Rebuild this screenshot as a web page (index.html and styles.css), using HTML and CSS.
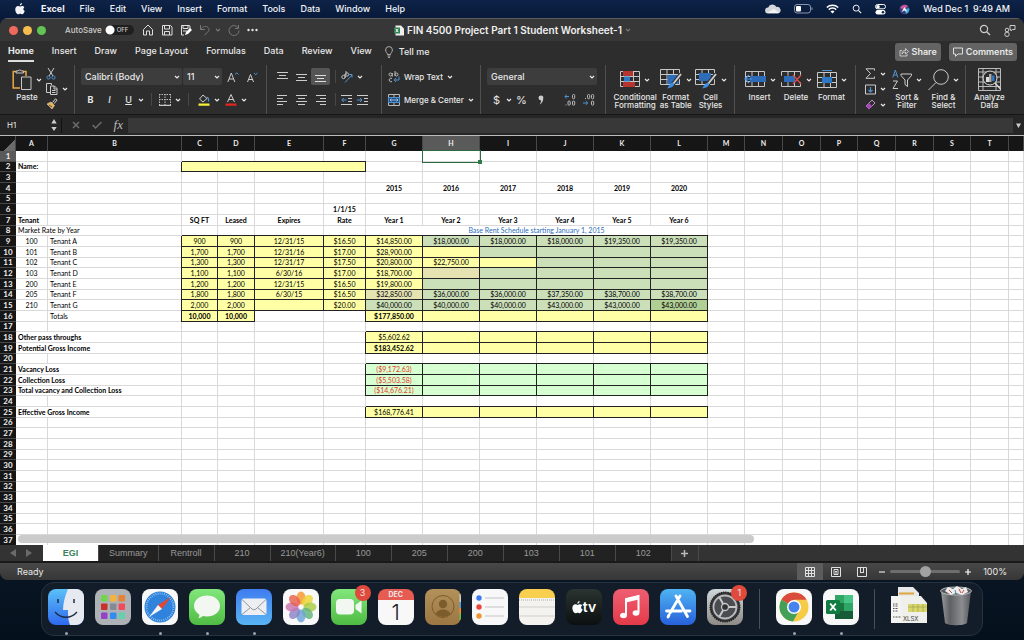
FILE: index.html
```html
<!DOCTYPE html>
<html lang="en">
<head>
    <meta charset="UTF-8">
    <meta name="viewport" content="width=device-width, initial-scale=1.0">
    <title>FIN 4500 Project Part 1 Student Worksheet-1</title>
    <link rel="stylesheet" href="styles.css">
</head>
<body>

    <svg class="sprite" aria-hidden="true">
        <symbol id="chev" viewBox="0 0 6 6"><path d="M1 2l2 2 2-2" fill="none" stroke="currentColor" stroke-width="1.2"/></symbol>
        <symbol id="apple" viewBox="0 0 20 24"><path d="M14 0c.2 2.400-2 5-4.300 4.900C9.500 2.600 11.700.3 14 0zM18.600 8.300c-2.900 1.800-2.500 6.300.9 7.600-.9 2.800-3 6.600-5.200 6.700-1.500 0-2.100-.9-3.900-.9s-2.500.9-3.900.9C3.300 22.600.5 17 .5 13 .5 8.700 3.200 6.200 6 6.200c1.800 0 3 1 4.300 1 1.200 0 2.600-1.200 4.700-1.100 1.400.1 2.800.8 3.600 2.200z" fill="currentColor"/></symbol>
        <symbol id="lens" viewBox="0 0 12 12"><circle cx="5" cy="5" r="3.600" fill="none" stroke="currentColor" stroke-width="1.200"/><path d="M7.700 7.700L11 11" stroke="currentColor" stroke-width="1.300"/></symbol>
        <symbol id="grid" viewBox="0 0 20 16"><path d="M.5.5h19v15H.5zM.5 5.500h19M.5 10.500h19M7 .5v15M13.500 .5v15" fill="none" stroke="#c8c8c8"/></symbol>
    </svg>

    <header class="menubar">
        <svg class="apple" width="10" height="12"><use href="#apple"/></svg>
        <nav class="menus">
            <button class="app-name">Excel</button>
            <button>File</button>
            <button>Edit</button>
            <button>View</button>
            <button>Insert</button>
            <button>Format</button>
            <button>Tools</button>
            <button>Data</button>
            <button>Window</button>
            <button>Help</button>
        </nav>
        <div class="tray">
            <svg width="16" height="10" viewBox="0 0 16 10"><path d="M3 9.500a3 3 0 0 1 .2-6A4.500 4.500 0 0 1 11.500 3 3.300 3.300 0 0 1 13 9.500z" fill="#d4d7dc"/><path d="M2 9l7-4 5 4z" fill="#f3f4f6"/></svg>
            <svg width="19" height="10" viewBox="0 0 19 10"><rect x=".5" y=".5" width="16" height="8.500" rx="2.500" fill="none" stroke="#8894a8"/><rect x="2" y="2" width="5" height="5.500" rx="1" fill="#fff"/><path d="M18 3.500v2.500" stroke="#8894a8"/></svg>
            <svg width="13" height="10" viewBox="0 0 13 10"><path d="M.8 3.500a8.300 8.300 0 0 1 11.400 0M2.800 5.600a5.300 5.300 0 0 1 7.400 0" fill="none" stroke="#fff" stroke-width="1.500"/><path d="M4.500 7.400a3 3 0 0 1 4 0l-2 2.200z" fill="#fff"/></svg>
            <svg width="10" height="10"><use href="#lens"/></svg>
            <svg width="11" height="11" viewBox="0 0 11 11"><rect x=".5" y=".5" width="10" height="4.300" rx="2.100" fill="none" stroke="#fff"/><circle cx="3" cy="2.700" r="1.800" fill="#fff"/><rect x=".5" y="6" width="10" height="4.500" rx="2.200" fill="#fff"/><circle cx="8" cy="8.200" r="1.300" fill="#10254a"/></svg>
            <svg width="11" height="11" viewBox="0 0 11 11"><circle cx="5.500" cy="5.500" r="5" fill="#3d3a78"/><path d="M1 4a5 5 0 0 1 8-2L5.500 5.500z" fill="#c9549c"/><path d="M10 4a5 5 0 0 1-3 6L5.500 5.500z" fill="#34a8cf"/><path d="M2.500 8l3-5 3 5-3-1.500z" fill="#e8effc"/></svg>
            <time class="clock">Wed Dec 1&nbsp; 9:49 AM</time>
        </div>
    </header>

    <main class="window">
        <div class="titlebar">
            <div class="title-left">
                <div class="lights"><span class="red"></span><span class="amber"></span><span class="green"></span></div>
                <label class="autosave">AutoSave <input type="checkbox"><span class="toggle">OFF</span></label>
                <div class="quick">
                    <button aria-label="Home"><svg width="12" height="12" viewBox="0 0 12 12"><path d="M1.500 5.500L6 1l4.500 4.500V11H7.500V7h-3v4h-3z" fill="none" stroke="#ddd"/></svg></button>
                    <button aria-label="Save"><svg width="12" height="12" viewBox="0 0 12 12"><path d="M1.500 1.500h8l1.500 1.500v8H1.500zM3.500 1.500v3.500h5V1.500M3.500 11V7.500h5V11" fill="none" stroke="#ddd"/></svg></button>
                    <button aria-label="Save As"><svg width="12" height="12" viewBox="0 0 12 12"><path d="M10 5V2L9 1.500H1.500V11H4M3 1.500v3h5v-3M3 7h4" fill="none" stroke="#ddd"/><path d="M5 11l1-3 4-4 2 2-4 4z" fill="#fff"/></svg></button>
                    <button class="dim" aria-label="Undo"><svg width="12" height="12" viewBox="0 0 12 12"><path d="M1.500 1v4.500H6M1.500 5.500C4 2 7 1.500 9 3.500s1 4-3.500 7.500" fill="none" stroke="currentColor"/></svg><svg width="6" height="6"><use href="#chev"/></svg></button>
                    <button class="dim" aria-label="Redo"><svg width="12" height="12" viewBox="0 0 12 12"><path d="M10.500 1v3.500H7M10.300 4A5 5 0 1 0 11 6.500" fill="none" stroke="currentColor"/></svg></button>
                    <button aria-label="More"><svg width="11" height="4" viewBox="0 0 11 4"><g fill="#e4e4e4"><circle cx="1.500" cy="2" r="1.200"/><circle cx="5.500" cy="2" r="1.200"/><circle cx="9.500" cy="2" r="1.200"/></g></svg></button>
                </div>
            </div>
            <h1 class="doc-title">
                <svg width="10" height="11" viewBox="0 0 10 11"><path d="M1.500.5H7l3 3V10.500H1.500z" fill="#eee"/><path d="M0 2.500h6v6H0z" fill="#2b7d4b"/><path d="M1.700 3.800l2.600 3.400M4.300 3.800L1.700 7.200" stroke="#fff"/></svg>
                FIN 4500 Project Part 1 Student Worksheet-1
                <svg class="dim" width="6" height="6"><use href="#chev"/></svg>
            </h1>
            <div class="title-tools">
                <button aria-label="Search"><svg width="12" height="12"><use href="#lens"/></svg></button>
                <button aria-label="Share status"><svg width="13" height="13" viewBox="0 0 13 13"><g fill="none" stroke="#ccc"><circle cx="4" cy="6" r="1.800"/><circle cx="4" cy="10.300" r="2.200"/><path d="M7 1.500h5v4H9.500L8 7V5.500H7z"/></g></svg></button>
            </div>
        </div>

        <div class="ribbon-tabs">
            <nav class="tabs">
                <button class="on">Home</button>
                <button>Insert</button>
                <button>Draw</button>
                <button>Page Layout</button>
                <button>Formulas</button>
                <button>Data</button>
                <button>Review</button>
                <button>View</button>
            </nav>
            <button class="tell"><svg width="8" height="12" viewBox="0 0 8 12"><path d="M2.500 8.500C2.500 7 .6 6 .6 4a3.400 3.400 0 0 1 6.800 0c0 2-1.900 3-1.900 4.500zM2.500 10h3M3 11.400h2" fill="none" stroke="#bbb" stroke-width=".9"/></svg>Tell me</button>
            <div class="actions">
                <button class="pill"><svg width="10" height="10" viewBox="0 0 10 10"><path d="M3 3.500H1v5.500h7V7M3 7c0-3 1.500-3.500 3.500-3.500V1.500l3 3-3 2.500V5C5 5 4 5.500 3 7z" fill="none" stroke="#ddd" stroke-width=".8"/></svg>Share</button>
                <button class="pill"><svg width="10" height="10" viewBox="0 0 10 10"><path d="M.5 1h9v6H5L2.500 9.300V7h-2z" fill="none" stroke="#ddd"/></svg>Comments</button>
            </div>
        </div>

        <div class="ribbon">
            <div class="group clip">
                <button class="big paste">
                    <span class="pic"><svg width="20" height="23" viewBox="0 0 20 23"><path d="M8 20H1.200V3.500H14V8" fill="none" stroke="#eaa944" stroke-width="1.500"/><path d="M4 5V3h2a2 2 0 0 1 3.500 0h2v2z" fill="#333" stroke="#c8c8c8"/><path d="M9.500 9h9.500v12.500H9.500z" fill="#2f2f2f" stroke="#c8c8c8"/></svg><svg class="chev"><use href="#chev"/></svg></span>
                    Paste
                </button>
                <div class="stack">
                    <button aria-label="Cut"><svg width="10" height="12" viewBox="0 0 10 12"><path d="M2 0l5 8M8 0L3 8" stroke="#ccc" fill="none"/><g fill="none" stroke="#4f93d2"><circle cx="2.500" cy="9.500" r="1.600"/><circle cx="7.500" cy="9.500" r="1.600"/></g></svg></button>
                    <button aria-label="Copy"><svg width="12" height="12" viewBox="0 0 12 12"><path d="M4 9.500H.5v-9h5V2M4.500 3h4L11 5.500v6H4.500zM8 3v3h3M6 7.500h3.500M6 9.500h3.500" fill="none" stroke="#ccc"/></svg><svg class="chev"><use href="#chev"/></svg></button>
                    <button aria-label="Format Painter"><svg width="12" height="12" viewBox="0 0 12 12"><path d="M6.500 4.500L9.500.8l1.500 1.400-3 3.500" fill="none" stroke="#ddd"/><path d="M1 6l4-2 3.500 3.500L6 11z" fill="#e5b35c" stroke="#e8d3a8" stroke-width=".6"/><path d="M3 7l3 2" stroke="#2d2d2d" stroke-width=".8"/></svg></button>
                </div>
            </div>

            <div class="group font">
                <div class="row">
                    <div class="drop grow"><select aria-label="Font"><option>Calibri (Body)</option></select><svg class="chev"><use href="#chev"/></svg></div>
                    <div class="drop size"><select aria-label="Font size"><option>11</option></select><svg class="chev"><use href="#chev"/></svg></div>
                    <button class="slot" aria-label="Grow font"><svg width="12" height="12" viewBox="0 0 12 12"><path d="M.8 11L4.300 2l3.500 9M2 8h4.700" fill="none" stroke="#ccc"/><path d="M8 3.500L9.800 1.800l1.700 1.700" fill="none" stroke="#4f93d2"/></svg></button>
                    <button class="slot" aria-label="Shrink font"><svg width="12" height="12" viewBox="0 0 12 12"><path d="M1.500 11l3-7.500 3 7.500M2.500 8.500h4" fill="none" stroke="#ccc"/><path d="M8 2l1.700 1.700L11.500 2" fill="none" stroke="#4f93d2"/></svg></button>
                </div>
                <div class="row">
                    <button class="slot strong">B</button>
                    <button class="slot italic">I</button>
                    <button class="slot under">U</button>
                    <svg class="chev"><use href="#chev"/></svg>
                    <i class="bar"></i>
                    <button aria-label="Borders"><svg width="12" height="12" viewBox="0 0 12 12"><path d="M.5 0v11M11.500 0v11M6 0v11M0 .5h12M0 5.500h12" stroke="#bbb" stroke-dasharray="1.500 1" fill="none"/><path d="M0 11.300h12" stroke="#eee"/></svg><svg class="chev"><use href="#chev"/></svg></button>
                    <i class="bar"></i>
                    <button class="tint" aria-label="Fill color"><svg width="12" height="12" viewBox="0 0 12 12"><path d="M5 1l4 3.500-4 3.500-3.500-3z" fill="none" stroke="#ccc"/><path d="M9 3.500c1.500 0 1.700 2 1.500 4" stroke="#4f93d2" stroke-width="1.300" fill="none"/><path d="M.5 9.500h11v2.200H.5z" fill="#f7ef37"/></svg><svg class="chev"><use href="#chev"/></svg></button>
                    <button class="tint" aria-label="Font color"><svg width="12" height="12" viewBox="0 0 12 12"><path d="M2.500 8L6 .5 9.500 8M3.700 5.500h4.600" fill="none" stroke="#ccc"/><path d="M.5 9.500h11v2.200H.5z" fill="#e2261d"/></svg><svg class="chev"><use href="#chev"/></svg></button>
                </div>
            </div>

            <div class="group align">
                <div class="row">
                    <button class="slot" aria-label="Align top"><svg width="11" height="12" viewBox="0 0 11 12"><path d="M0 1.500h11M2 4.500h7M0 7.500h11" stroke="#ccc"/></svg></button>
                    <button class="slot" aria-label="Align middle"><svg width="11" height="12" viewBox="0 0 11 12"><path d="M0 3.500h11M2 6.500h7M0 9.500h11" stroke="#ccc"/></svg></button>
                    <button class="slot on" aria-label="Align bottom"><svg width="11" height="12" viewBox="0 0 11 12"><path d="M0 4.500h11M2 7.500h7M0 10.500h11" stroke="#ddd"/></svg></button>
                    <i class="bar"></i>
                    <button aria-label="Orientation"><svg width="12" height="12" viewBox="0 0 12 12"><g fill="none" stroke="#bbb"><circle cx="2.500" cy="6" r="1.700"/><circle cx="6" cy="3.500" r="1.700"/><path d="M4 7V3M5 0v4"/></g><path d="M4 11.500L11 4M8 3.500h3v3" fill="none" stroke="#4f93d2"/></svg><svg class="chev"><use href="#chev"/></svg></button>
                </div>
                <div class="row">
                    <button class="slot" aria-label="Align left"><svg width="11" height="12" viewBox="0 0 11 12"><path d="M0 1.500h10M0 4.500h6M0 7.500h10M0 10.500h6" stroke="#ccc"/></svg></button>
                    <button class="slot" aria-label="Center"><svg width="11" height="12" viewBox="0 0 11 12"><path d="M0 1.500h11M2 4.500h7M0 7.500h11M2 10.500h7" stroke="#ccc"/></svg></button>
                    <button class="slot" aria-label="Align right"><svg width="11" height="12" viewBox="0 0 11 12"><path d="M1 1.500h10M5 4.500h6M1 7.500h10M5 10.500h6" stroke="#ccc"/></svg></button>
                    <i class="bar"></i>
                    <button aria-label="Decrease indent"><svg width="12" height="12" viewBox="0 0 12 12"><path d="M0 1.500h11M7 4.500h4M7 7.500h4M0 10.500h11" stroke="#ccc"/><path d="M5.500 6H.8M2.800 4L.8 6l2 2" fill="none" stroke="#4f93d2"/></svg></button>
                    <button class="slot" aria-label="Increase indent"><svg width="12" height="12" viewBox="0 0 12 12"><path d="M0 1.500h11M7 4.500h4M7 7.500h4M0 10.500h11" stroke="#ccc"/><path d="M0 6h5M3 4l2 2-2 2" fill="none" stroke="#4f93d2"/></svg></button>
                </div>
            </div>

            <div class="group wrap">
                <div class="row">
                    <button><svg width="12" height="12" viewBox="0 0 12 12"><g fill="none" stroke="#bbb"><circle cx="2.500" cy="3.500" r="1.500"/><path d="M4.300 2v3.500M7 0v5"/><circle cx="8.500" cy="3.500" r="1.500"/><path d="M4 7.500a1.800 1.800 0 1 0 0 3"/></g><path d="M11 5.500v3.500H6.500M8 7L6.300 9 8 11" fill="none" stroke="#4f93d2"/></svg>Wrap Text<svg class="chev"><use href="#chev"/></svg></button>
                </div>
                <div class="row">
                    <button><svg width="12" height="12" viewBox="0 0 12 12"><path d="M.5.5h11v11H.5zM6 .5v3M6 9v3" fill="none" stroke="#bbb"/><path d="M.5 3.500h11v5H.5z" fill="#1f4d80" stroke="#4f93d2"/><path d="M2 6h8M3.500 4.700L2 6l1.500 1.300M8.500 4.700L10 6 8.500 7.300" fill="none" stroke="#b9dafa" stroke-width=".8"/></svg>Merge &amp; Center<svg class="chev"><use href="#chev"/></svg></button>
                </div>
            </div>

            <div class="group number">
                <div class="row">
                    <div class="drop grow"><select aria-label="Number format"><option>General</option></select><svg class="chev"><use href="#chev"/></svg></div>
                </div>
                <div class="row">
                    <button class="slot sym">$</button>
                    <svg class="chev"><use href="#chev"/></svg>
                    <button class="slot sym">%</button>
                    <button class="slot" aria-label="Comma style"><svg width="8" height="12" viewBox="0 0 8 12"><path d="M4 1.500a2.300 2.300 0 0 1 2.300 2.500C6.300 7 5 9.500 2.500 10.500c1-1.300 1.600-2.500 1.600-4A2.300 2.300 0 1 1 4 1.500z" fill="#ccc"/></svg></button>
                    <i class="bar"></i>
                    <button class="slot" aria-label="Increase decimal"><svg width="12" height="12" viewBox="0 0 12 12"><path d="M5 2.500H.8M2.800.7L.8 2.500l2 1.800" fill="none" stroke="#4f93d2"/><g fill="none" stroke="#bbb"><rect x="8.500" y=".5" width="2.200" height="4.200" rx="1"/><rect x="4" y="7" width="2.200" height="4.200" rx="1"/><rect x="8.500" y="7" width="2.200" height="4.200" rx="1"/><path d="M2 10.500v1"/></g></svg></button>
                    <button class="slot" aria-label="Decrease decimal"><svg width="12" height="12" viewBox="0 0 12 12"><path d="M0 9h4.500M2.800 7.200l2 1.800-2 1.800" fill="none" stroke="#4f93d2"/><g fill="none" stroke="#bbb"><rect x="4.500" y=".5" width="2.200" height="4.200" rx="1"/><rect x="8.500" y=".5" width="2.200" height="4.200" rx="1"/><rect x="8.500" y="7" width="2.200" height="4.200" rx="1"/><path d="M2.500 4v1"/></g></svg></button>
                </div>
            </div>

            <div class="group bigs">
                <button class="big">
                    <span class="pic"><svg width="20" height="17" viewBox="0 0 20 17"><use href="#grid" width="20" height="16"/><path d="M3 0h10v5H3zM3 11h12v5H3z" fill="#b8352f"/><path d="M4 5.500h6v5H4z" fill="#2c78c4"/></svg><svg class="chev"><use href="#chev"/></svg></span>
                    Conditional<br>Formatting
                </button>
                <button class="big">
                    <span class="pic"><svg width="22" height="21" viewBox="0 0 22 21"><use href="#grid" width="20" height="16"/><path d="M7.500 6h11v9h-11z" fill="#2c6cb8"/><path d="M21 5l-8 10" stroke="#2d2d2d" stroke-width="4"/><path d="M21 5l-8 10" stroke="#ccc" stroke-width="2"/><path d="M13 13.500c2 2 1 5-6 6 2-2 2-5 6-6z" fill="#3d8ee0"/></svg><svg class="chev"><use href="#chev"/></svg></span>
                    Format<br>as Table
                </button>
                <button class="big">
                    <span class="pic"><svg width="22" height="21" viewBox="0 0 22 21"><use href="#grid" width="20" height="16"/><path d="M4 4h12v8H4z" fill="#2c6cb8"/><path d="M21 5l-8 10" stroke="#2d2d2d" stroke-width="4"/><path d="M21 5l-8 10" stroke="#ccc" stroke-width="2"/><path d="M13 13.500c2 2 1 5-6 6 2-2 2-5 6-6z" fill="#3d8ee0"/></svg><svg class="chev"><use href="#chev"/></svg></span>
                    Cell<br>Styles
                </button>
            </div>

            <div class="group bigs">
                <button class="big">
                    <span class="pic"><svg width="22" height="17" viewBox="0 0 22 17"><use href="#grid" x="1" width="20" height="16"/><path d="M6 5h16v6H6z" fill="#2c6cb8"/><path d="M8 8H1M5 4L1 8l4 4" fill="none" stroke="#4f9be8" stroke-width="1.200"/></svg><svg class="chev"><use href="#chev"/></svg></span>
                    Insert
                </button>
                <button class="big">
                    <span class="pic"><svg width="21" height="17" viewBox="0 0 21 17"><use href="#grid" width="20" height="16"/><path d="M0 4.800h20v6.400H0z" fill="#2d2d2d"/><path d="M3 5h11v6H3z" fill="#2c6cb8"/><path d="M12 4l8 9M20 4l-8 9" stroke="#e0504a" stroke-width="1.200"/></svg><svg class="chev"><use href="#chev"/></svg></span>
                    Delete
                </button>
                <button class="big">
                    <span class="pic"><svg width="20" height="20" viewBox="0 0 20 20"><use href="#grid" y="2" width="20" height="16"/><path d="M5 7h10v6H5z" fill="#2c78c4"/><path d="M5 .5h10" stroke="#4f93d2"/></svg><svg class="chev"><use href="#chev"/></svg></span>
                    Format
                </button>
            </div>

            <div class="group edit">
                <div class="stack">
                    <button aria-label="AutoSum"><svg width="11" height="11" viewBox="0 0 11 11"><path d="M9.500 2.500V.8H1l4.500 4.700L1 10.300h8.500V8.500" fill="none" stroke="#ccc"/></svg><svg class="chev"><use href="#chev"/></svg></button>
                    <button aria-label="Fill"><svg width="11" height="11" viewBox="0 0 11 11"><path d="M.5 1h10v9H.5z" fill="none" stroke="#ccc"/><path d="M5.500 3v5M3.500 6l2 2 2-2" fill="none" stroke="#4f93d2" stroke-width="1.200"/></svg><svg class="chev"><use href="#chev"/></svg></button>
                    <button aria-label="Clear"><svg width="11" height="11" viewBox="0 0 11 11"><path d="M1 7l6-6 3 3-6 6z" fill="none" stroke="#c98bd2"/><path d="M1 7l3-3 3 3-3 3.500z" fill="#a347b3"/></svg><svg class="chev"><use href="#chev"/></svg></button>
                </div>
                <button class="big">
                    <span class="pic"><svg width="20" height="21" viewBox="0 0 20 21"><path d="M.8 8.500L3.300 1l2.500 7.500M1.500 6h3.600" fill="none" stroke="#4f93d2"/><path d="M1 12h4.500L1 19.500h5" fill="none" stroke="#ccc"/><path d="M9 5h10.500v1.500L15.500 11v6.500L13 15.500V11L9 6.500z" fill="none" stroke="#ccc"/></svg><svg class="chev"><use href="#chev"/></svg></span>
                    Sort &amp;<br>Filter
                </button>
                <button class="big">
                    <span class="pic"><svg width="21" height="22" viewBox="0 0 21 22"><circle cx="13" cy="8" r="7.300" fill="none" stroke="#ccc"/><path d="M8 13.500L.5 21" stroke="#ccc"/></svg><svg class="chev"><use href="#chev"/></svg></span>
                    Find &amp;<br>Select
                </button>
            </div>

            <div class="group last">
                <button class="big">
                    <span class="pic"><svg width="23" height="23" viewBox="0 0 23 23"><path d="M.5 .5h22v22H.5zM.5 4h22M.5 9h22M.5 14h22M.5 18.500h22M5 .5v22M18 .5v22" fill="none" stroke="#bbb"/><circle cx="12" cy="10" r="7" fill="#2d2d2d" stroke="#ddd"/><path d="M8 9h3v5H8z" fill="#ddd"/><path d="M11 6h2.500v8H11z" fill="#aaa"/><path d="M14 7.500h2.500V13H14z" fill="#2c78c4"/><path d="M17 15l5.500 6" stroke="#ddd" stroke-width="1.300"/></svg></span>
                    Analyze<br>Data
                </button>
            </div>
        </div>

        <div class="formula-bar">
            <input class="name-box" aria-label="Name box" value="H1">
            <svg class="stepper" width="6" height="14" viewBox="0 0 6 14"><path d="M3 1l2.700 4.500H.3zM3 13L.3 9h5.400z" fill="#ccc"/></svg>
            <div class="fx-tools">
                <svg width="8" height="8" viewBox="0 0 8 8"><path d="M1 1l6 6M7 1L1 7" stroke="#6c6c6c" stroke-width="1.500"/></svg>
                <svg width="10" height="8" viewBox="0 0 10 8"><path d="M.7 4L3.500 7l6-6" fill="none" stroke="#6c6c6c" stroke-width="1.500"/></svg>
                <span class="fx">fx</span>
            </div>
            <input class="formula" aria-label="Formula">
            <svg class="open" width="5" height="5" viewBox="0 0 5 5"><path d="M0 .5h5L2.500 5z" fill="#ccc"/></svg>
        </div>

        <div class="sheet">
            <table id="cells"></table>
            <div class="scroll-thumb"></div>
        </div>

        <div class="sheet-tabs">
            <div class="arrows">
                <svg width="6" height="8" viewBox="0 0 6 8"><path d="M6 0v8L0 4z" fill="#6a6a6a"/></svg>
                <svg width="6" height="8" viewBox="0 0 6 8"><path d="M0 0v8l6-4z" fill="#6a6a6a"/></svg>
            </div>
            <button class="on">EGI</button>
            <button>Summary</button>
            <button>Rentroll</button>
            <button>210</button>
            <button>210(Year6)</button>
            <button>100</button>
            <button>205</button>
            <button>200</button>
            <button>103</button>
            <button>101</button>
            <button>102</button>
            <button class="add" aria-label="New sheet"><svg width="7" height="7" viewBox="0 0 7 7"><path d="M3.500 0v7M0 3.500h7" stroke="#bbb" stroke-width="1.500"/></svg></button>
        </div>

        <div class="status">
            <span>Ready</span>
            <div class="views">
                <button class="on" aria-label="Normal view"><svg width="10" height="10" viewBox="0 0 10 10"><path d="M.5.5h9v9h-9zM3.500 0v10M6.500 0v10M0 3.500h10M0 6.500h10" fill="none" stroke="#e0e0e0"/></svg></button>
                <button aria-label="Page layout"><svg width="10" height="10" viewBox="0 0 10 10"><path d="M.5.5h9v9h-9zM3 2.500h4v5H3zM4 4.500h2M4 6h2" fill="none" stroke="#e0e0e0"/></svg></button>
                <button aria-label="Page break"><svg width="10" height="10" viewBox="0 0 10 10"><path d="M.5.5h9v9h-9zM3.500 0v5.500M6.500 0v5.500M3 5.500h4" fill="none" stroke="#e0e0e0"/></svg></button>
            </div>
            <div class="zoom">
                <button aria-label="Zoom out"><svg width="6" height="6" viewBox="0 0 6 6"><path d="M0 3h6" stroke="#fff" stroke-width="1.200"/></svg></button>
                <input type="range" aria-label="Zoom" min="0" max="200" value="100">
                <button aria-label="Zoom in"><svg width="6" height="6" viewBox="0 0 6 6"><path d="M0 3h6M3 0v6" stroke="#fff" stroke-width="1.200"/></svg></button>
                <span>100%</span>
            </div>
        </div>
    </main>

    <footer class="dock">
        <div class="app run finder"><svg viewBox="0 0 36 36"><path d="M20 0c-3 7-5 14-5 21h5c0 6 0 10 2 15h14V0z" fill="#e6e9ef"/><path d="M10 10v4M26 10v4" stroke="#1d2a40" stroke-width="1.500"/><path d="M7 23c6 7 16 7 22 0" fill="none" stroke="#1d2a40" stroke-width="1.300"/></svg></div>
        <div class="app launchpad"><svg viewBox="0 0 36 36"><rect x="6" y="6" width="6.500" height="6.500" rx="1" fill="#72d64c"/><rect x="15" y="6" width="6.500" height="6.500" rx="1" fill="#f3b33d"/><rect x="23.500" y="6" width="6.500" height="6.500" rx="1" fill="#e88336"/><rect x="6" y="14.500" width="6.500" height="6.500" rx="1" fill="#c9302c"/><rect x="15" y="14.500" width="6.500" height="6.500" rx="1" fill="#858a90"/><rect x="23.500" y="14.500" width="6.500" height="6.500" rx="1" fill="#f04a5b"/><rect x="6" y="23.500" width="6.500" height="6.500" rx="1" fill="#9442c6"/><rect x="15" y="23.500" width="6.500" height="6.500" rx="1" fill="#2f8df0"/><rect x="23.500" y="23.500" width="6.500" height="6.500" rx="1" fill="#64d0ae"/></svg></div>
        <div class="app run white"><svg viewBox="0 0 36 36"><circle cx="18" cy="18" r="15.500" fill="#2f83dc"/><circle cx="18" cy="18" r="13.500" fill="none" stroke="#b9dcf8" stroke-width="2" stroke-dasharray=".6 1.500"/><path d="M29 8L20 20l-4-4z" fill="#e8452f"/><path d="M7 28l9-12 4 4z" fill="#f4f4f4"/></svg></div>
        <div class="app run messages"><svg viewBox="0 0 36 36"><path d="M18 6.500c7.500 0 13 4.500 13 10.500s-5.500 10.500-13 10.500c-1.500 0-3-.2-4.300-.5-1.200 1.400-2.700 2-4.400 2.200.9-1.100 1.200-2.300.9-3.700C7 23.500 5 20.500 5 17 5 11 10.500 6.500 18 6.500z" fill="#f2f7f1"/></svg></div>
        <div class="app run mail"><svg viewBox="0 0 36 36"><rect x="5.500" y="9.500" width="25" height="16.500" rx="2" fill="#eceef1"/><path d="M6 10.500l10 9.500c1.200 1 2.800 1 4 0l10-9.500M6 25.500l8.500-7M30 25.500l-8.500-7" fill="none" stroke="#8f959d"/></svg></div>
        <div class="app white"><svg viewBox="0 0 36 36"><g fill-opacity=".82"><ellipse cx="18" cy="9" rx="4.600" ry="6.500" fill="#f5972d"/><ellipse cx="18" cy="9" rx="4.600" ry="6.500" fill="#ecd636" transform="rotate(45 18 18)"/><ellipse cx="18" cy="9" rx="4.600" ry="6.500" fill="#a8cc47" transform="rotate(90 18 18)"/><ellipse cx="18" cy="9" rx="4.600" ry="6.500" fill="#62b57c" transform="rotate(135 18 18)"/><ellipse cx="18" cy="9" rx="4.600" ry="6.500" fill="#6ca4d8" transform="rotate(180 18 18)"/><ellipse cx="18" cy="9" rx="4.600" ry="6.500" fill="#8c84c6" transform="rotate(225 18 18)"/><ellipse cx="18" cy="9" rx="4.600" ry="6.500" fill="#c874ae" transform="rotate(270 18 18)"/><ellipse cx="18" cy="9" rx="4.600" ry="6.500" fill="#e85f4c" transform="rotate(315 18 18)"/></g></svg></div>
        <div class="app messages"><svg viewBox="0 0 36 36"><rect x="5" y="10" width="18" height="15.500" rx="4" fill="#f2f7f1"/><path d="M24.500 16l6-4.500v13l-6-4.500z" fill="#f2f7f1"/></svg><span class="badge">3</span></div>
        <div class="app calendar"><span class="month">DEC</span><span class="day">1</span></div>
        <div class="app contacts"><svg viewBox="0 0 36 36"><path d="M34.500 5h1.500v8h-1.500z" fill="#c9ced3"/><path d="M34.500 13h1.500v6h-1.500z" fill="#4da0d8"/><path d="M34.500 19h1.500v6h-1.500z" fill="#f0912c"/><path d="M34.500 25h1.500v6h-1.500z" fill="#62c455"/><circle cx="18" cy="17.500" r="11" fill="none" stroke="#7c5c2c"/><circle cx="18" cy="15" r="4.200" fill="#7c5c2c"/><path d="M10.500 25c2-6 13-6 15 0a11 11 0 0 1-15 0z" fill="#7c5c2c"/></svg></div>
        <div class="app white"><svg viewBox="0 0 36 36"><path d="M13 9h19M13 18h19M13 27h19" stroke="#c4c4c8"/><circle cx="7" cy="9" r="2.700" fill="#3b7cf0"/><circle cx="7" cy="18" r="2.700" fill="#e8463a"/><circle cx="7" cy="27" r="2.700" fill="#ee9530"/></svg></div>
        <div class="app notes"><svg viewBox="0 0 36 36"><path d="M0 11h36" stroke="#aaa" stroke-dasharray="1 1"/><path d="M0 18h36M0 27h36" stroke="#d0cfca"/></svg></div>
        <div class="app tv"><svg width="11" height="13"><use href="#apple"/></svg>tv</div>
        <div class="app music"><svg viewBox="0 0 36 36"><path d="M13 26V10l12.500-3v16.500" fill="none" stroke="#fff" stroke-width="2"/><path d="M13 9.500L25.500 6.500v4L13 13.500z" fill="#fff"/><ellipse cx="10.500" cy="26.500" rx="3.400" ry="2.800" fill="#fff"/><ellipse cx="23" cy="24" rx="3.400" ry="2.800" fill="#fff"/></svg></div>
        <div class="app store"><svg viewBox="0 0 36 36"><path d="M16 7l11.500 20.500M20 7L10 24M6.500 22h15M26 22h4M9 26l-1 2" fill="none" stroke="#fff" stroke-width="2.800" stroke-linecap="round"/></svg></div>
        <div class="app settings"><svg viewBox="0 0 36 36"><circle cx="18" cy="18" r="15" fill="#3a3c3f"/><circle cx="18" cy="18" r="14.500" fill="none" stroke="#222" stroke-width="2" stroke-dasharray="1.200 1"/><circle cx="18" cy="18" r="11.500" fill="#4a4c50" stroke="#b8babd" stroke-width="1.800"/><circle cx="18" cy="18" r="3.500" fill="#333" stroke="#c6c8ca" stroke-width="1.300"/><path d="M21.500 18H29M16.200 15L12.500 8.500M16.200 21l-3.700 6.500" stroke="#c6c8ca" stroke-width="2"/></svg><span class="badge">1</span></div>
        <i class="rule"></i>
        <div class="app run white"><svg viewBox="0 0 36 36"><circle cx="18" cy="18" r="14.500" fill="#f6cb45"/><path d="M18 18L5.400 10.700A14.500 14.500 0 0 1 30.600 10.700H18z" fill="#da4a3d"/><path d="M18 18l-12.600-7.200A14.500 14.500 0 0 0 17 32.500l5-9z" fill="#44a058"/><circle cx="18" cy="18" r="7" fill="#fff"/><circle cx="18" cy="18" r="5.500" fill="#4583ee"/></svg></div>
        <div class="app run white"><svg viewBox="0 0 36 36"><path d="M12 6h9v8h-9z" fill="#2fa566"/><path d="M21 6h9v8h-9z" fill="#48c487"/><path d="M12 14h9v8h-9z" fill="#1b7742"/><path d="M21 14h9v8h-9z" fill="#2fa566"/><path d="M12 22h18v8H12z" fill="#185c37"/><rect x="3" y="11" width="14" height="14" rx="1.500" fill="#107c41"/><path d="M7.200 14.500l5.600 7M12.800 14.500l-5.600 7" stroke="#fff" stroke-width="1.900"/></svg></div>
        <i class="rule"></i>
        <div class="app file"><svg viewBox="0 0 36 38"><path d="M7 0h15l6 6v20H7z" fill="#e8e8e8"/><path d="M8 5.500h15v2H8z" fill="#dfa63c"/><path d="M0 9h17v27H0z" fill="#f4f4f2"/><path d="M10 9h20l6 7v20H10z" fill="#efefeb"/><path d="M17 17h19v8H17z" fill="#d8d66a"/><path d="M17 20h19M22 17v8M27 17v8M32 17v8" stroke="#9c9c4c" stroke-width=".6"/><path d="M2 17h5M2 19h5M2 21.500h5M2 24h5M2 30h8" stroke="#555" stroke-dasharray="1 .5"/><text x="12" y="34" class="ext">XLSX</text></svg></div>
        <div class="app file"><svg viewBox="0 0 36 40"><defs><linearGradient id="can"><stop offset="0" stop-color="#9a9b9d"/><stop offset=".3" stop-color="#5e6063"/><stop offset=".7" stop-color="#8b8d90"/><stop offset="1" stop-color="#54565a"/></linearGradient></defs><path d="M3 5h30l-4 32c-3 3-19 3-22 0z" fill="url(#can)"/><ellipse cx="18" cy="5" rx="15.500" ry="4" fill="#55585c" stroke="#b9bbbd"/><path d="M7 5l3-4 5 2 4-3 5 3 4-2 2 5-6 3-6-2-5 2z" fill="#eceded"/><path d="M11 4l3 3M21 3l2 4M26 4l-2 3" stroke="#c94e3f"/><path d="M17 4l1 4" stroke="#3f8fb9"/></svg></div>
    </footer>

    <script src="sheet.js"></script>
</body>
</html>
```

FILE: sheet.js
```js
const columns = "ABCDEFGHIJKLMNOPQRST".split("");
const widths = [16, 32, 134, 36, 37, 69, 42, 57, 57, 57, 57, 57, 57, 37, 38, 38, 37, 38, 38, 37, 38];
const rowCount = 37;

// address: [text, classes, colspan]
const data = {
    A2: ["Name:", "b"],
    C2: ["", "y", 4],
    F6: ["1/1/15", "b c"],
    A7: ["Tenant", "b"],
    C7: ["SQ FT", "b c"],
    D7: ["Leased", "b c"],
    E7: ["Expires", "b c"],
    F7: ["Rate", "b c"],
    A8: ["Market Rate by Year", "", 2],
    G8: ["Base Rent Schedule starting January 1, 2015", "blue c", 6],
    B16: ["Totals", ""],
    C16: ["10,000", "y b c"],
    D16: ["10,000", "y b c"],
    G16: ["$177,850.00", "y b c"],
    A18: ["Other pass throughs", "b", 2],
    G18: ["$5,602.62", "y c"],
    A19: ["Potential Gross Income", "b", 2],
    G19: ["$183,452.62", "y b c"],
    A21: ["Vacancy Loss", "b", 2],
    G21: ["($9,172.63)", "m red c"],
    A22: ["Collection Loss", "b", 2],
    G22: ["($5,503.58)", "m red c"],
    A23: ["Total vacancy and Collection Loss", "b", 2],
    G23: ["($14,676.21)", "m red c"],
    A25: ["Effective Gross Income", "b", 2],
    G25: ["$168,776.41", "y c"],
};

const tenants = [
    ["100", "Tenant A", "900", "900", "12/31/15", "$16.50", "$14,850.00", "$18,000.00", "$18,000.00", "$18,000.00", "$19,350.00", "$19,350.00"],
    ["101", "Tenant B", "1,700", "1,700", "12/31/16", "$17.00", "$28,900.00", "", "", "", "", ""],
    ["102", "Tenant C", "1,300", "1,300", "12/31/17", "$17.50", "$20,800.00", "$22,750.00", "", "", "", ""],
    ["103", "Tenant D", "1,100", "1,100", "6/30/16", "$17.00", "$18,700.00", "", "", "", "", ""],
    ["200", "Tenant E", "1,200", "1,200", "12/31/15", "$16.50", "$19,800.00", "", "", "", "", ""],
    ["205", "Tenant F", "1,800", "1,800", "6/30/15", "$16.50", "$32,850.00", "$36,000.00", "$36,000.00", "$37,350.00", "$38,700.00", "$38,700.00"],
    ["210", "Tenant G", "2,000", "2,000", "", "$20.00", "$40,000.00", "$40,000.00", "$40,000.00", "$43,000.00", "$43,000.00", "$43,000.00"],
];

// fills for columns G to L, one letter per cell
const fills = ["yggggg", "yygggg", "yyyggg", "ytgggg", "yggggg", "tggggg", "gggggd"];

tenants.forEach((tenant, i) => {
    tenant.forEach((text, j) => {
        let cls = j === 1 ? "" : "c";
        if (j > 1) cls += j < 6 ? " y" : " " + fills[i][j - 6];
        data[columns[j] + (9 + i)] = [text, cls];
    });
});

["G", "H", "I", "J", "K", "L"].forEach((col, i) => {
    data[col + 4] = [String(2015 + i), "b c"];
    data[col + 7] = ["Year " + (i + 1), "b c"];
    if (i > 0) {
        [16, 18, 19, 25].forEach((row) => { data[col + row] = ["", "y"]; });
        [21, 22, 23].forEach((row) => { data[col + row] = ["", "m"]; });
    }
});
data.H1 = ["", "active"];

function renderSheet() {
    const table = document.getElementById("cells");
    const group = document.createElement("colgroup");
    widths.forEach((w) => {
        const col = document.createElement("col");
        col.style.width = w + "px";
        group.appendChild(col);
    });
    group.appendChild(document.createElement("col"));
    table.appendChild(group);

    const head = table.createTHead().insertRow();
    ["", ...columns, ""].forEach((name) => {
        const th = document.createElement("th");
        th.textContent = name;
        if (name === "H") th.className = "sel";
        head.appendChild(th);
    });
    head.firstChild.className = "corner";

    const body = table.createTBody();
    for (let r = 1; r <= rowCount; r++) {
        const row = body.insertRow();
        const th = document.createElement("th");
        th.textContent = r;
        if (r === 1) th.className = "sel";
        row.appendChild(th);
        for (let c = 0; c <= columns.length; c++) {
            const td = row.insertCell();
            const item = data[columns[c] + r];
            if (!item) continue;
            td.textContent = item[0];
            td.className = item[1];
            if (item[2]) {
                td.colSpan = item[2];
                c += item[2] - 1;
            }
        }
    }
}

renderSheet();
```

FILE: styles.css
```css
* {
    box-sizing: border-box;
}

body {
    margin: 0;
    height: 100vh;
    display: flex;
    flex-direction: column;
    overflow: hidden;
    background: linear-gradient(#0d2347, #081a3a 18px, #0a1624 560px, #04101c);
    color: #e8e8e8;
    font-family: Inter, "Liberation Sans", sans-serif;
    font-size: 9px;
    line-height: 12px;
}

button {
    display: flex;
    align-items: center;
    padding: 0;
    border: 0;
    background: none;
    color: inherit;
    font: inherit;
    white-space: nowrap;
}

svg {
    display: block;
    flex: none;
}

input, select {
    margin: 0;
    border: 0;
    background: none;
    color: inherit;
    font: inherit;
}

.sprite {
    position: absolute;
    width: 0;
    height: 0;
}

.chev {
    width: 6px;
    height: 6px;
}

.dim {
    color: #777;
}

/* menu bar */
.menubar {
    height: 18px;
    flex: none;
    display: flex;
    align-items: center;
    padding: 0 14px 0 15px;
    color: #f2f4f8;
    font-weight: 500;
}

.menus {
    display: flex;
    gap: 15px;
    margin-left: 16px;
}

.app-name {
    font-weight: 700;
}

.tray {
    display: flex;
    align-items: center;
    gap: 13px;
    margin-left: auto;
}

/* window frame */
.window {
    flex: 1;
    min-height: 0;
    display: flex;
    flex-direction: column;
    overflow: hidden;
    border-radius: 8px;
    background: #2d2d2d;
}

.titlebar {
    height: 23px;
    flex: none;
    display: grid;
    grid-template-columns: 1fr auto 1fr;
    align-items: center;
    padding: 0 8px 0 9px;
    background: #373737;
    border-top: 1px solid #5c5c5c;
}

.title-left {
    display: flex;
    align-items: center;
}

.lights {
    display: flex;
    gap: 5px;
}

.lights span {
    width: 9px;
    height: 9px;
    border-radius: 50%;
}

.lights .red { background: #ee6a5f; }
.lights .amber { background: #f5bd4f; }
.lights .green { background: #61c454; }

.autosave {
    display: flex;
    align-items: center;
    gap: 3px;
    margin-left: 19px;
    font-size: 8px;
    font-weight: 500;
    color: #ccc;
}

.autosave input {
    position: absolute;
    opacity: 0;
}

.toggle {
    width: 29px;
    height: 10px;
    padding-left: 12px;
    border-radius: 5px;
    background: radial-gradient(circle at 5px 5px, #fff 4px, #1f1f1f 5px);
    font-size: 6px;
    line-height: 10px;
}

.quick {
    display: flex;
    align-items: center;
    gap: 7px;
    margin-left: 8px;
}

.quick .dim {
    gap: 4px;
}

.doc-title {
    display: flex;
    align-items: center;
    gap: 3px;
    margin: 0;
    color: #f0f0f0;
    font-size: 10px;
    font-weight: 600;
    white-space: nowrap;
}

.title-tools {
    display: flex;
    justify-content: flex-end;
    gap: 12px;
    color: #ccc;
}

/* ribbon tabs */
.ribbon-tabs {
    height: 22px;
    flex: none;
    display: flex;
    align-items: center;
    padding: 0 7px 0 8px;
    font-weight: 500;
}

.tabs {
    display: flex;
    gap: 18px;
}

.tabs button {
    height: 20px;
    border-bottom: 2px solid transparent;
}

.tabs .on {
    border-color: #ddd;
    font-weight: 700;
}

.tell {
    gap: 6px;
    margin-left: 13px;
}

.actions {
    display: flex;
    gap: 8px;
    margin-left: auto;
}

.pill {
    height: 18px;
    gap: 3px;
    padding: 0 4px;
    border-radius: 3px;
    background: #636363;
    font-size: 9px;
    font-weight: 600;
}

/* ribbon */
.ribbon {
    height: 52px;
    flex: none;
    display: grid;
    grid-template-columns: 75fr 192fr 115fr 99fr 125fr 129fr 121fr 110fr 58fr;
    padding: 2px 0 5px;
    border-bottom: 1px solid #161616;
    font-size: 8px;
    line-height: 8px;
    font-weight: 500;
}

.group {
    min-width: 0;
    padding: 3px 6px 0;
    border-right: 1px solid #505050;
}

.row {
    height: 17px;
    display: flex;
    align-items: center;
    margin-bottom: 6px;
}

.row button {
    gap: 4px;
}

.slot {
    width: 19px;
    height: 17px;
    flex: none;
    justify-content: center;
}

.slot.on {
    border-radius: 2px;
    background: #555;
}

.bar {
    width: 1px;
    height: 13px;
    margin: 0 7px;
    background: #484848;
}

.align .bar, .number .bar {
    margin: 0 5px;
}

.tint {
    margin: 0 3px 0 2px;
}

.strong { font-weight: 700; font-size: 9px; }
.italic { font-style: italic; font-size: 9px; }
.under { text-decoration: underline; font-size: 9px; }
.sym { font-size: 11px; font-weight: 400; }

.drop {
    position: relative;
    height: 17px;
    border-radius: 2px;
    background: #3d3d3d;
}

.drop select {
    width: 100%;
    height: 17px;
    padding: 0 4px;
    appearance: none;
    font-size: 9px;
}

.drop .chev {
    position: absolute;
    right: 2px;
    top: 6px;
}

.grow {
    flex: 1;
}

.size {
    width: 39px;
    margin: 0 1px;
}

.clip, .bigs, .edit, .last {
    display: flex;
}

.clip {
    gap: 4px;
    padding: 3px 0 0 12px;
}

.font {
    padding-right: 5px;
}

.number {
    padding-right: 8px;
}

.bigs {
    justify-content: space-around;
}

.edit {
    justify-content: space-between;
    padding-left: 9px;
}

.last {
    padding-left: 8px;
    border-right: 0;
}

.big {
    flex-direction: column;
    font-size: 8px;
    line-height: 8px;
    text-align: center;
}

.pic {
    height: 23px;
    display: flex;
    align-items: center;
    gap: 4px;
    margin-bottom: 2px;
}

.stack {
    height: 42px;
    display: flex;
    flex-direction: column;
    justify-content: space-between;
}

.stack button {
    gap: 4px;
}

/* formula bar */
.formula-bar {
    height: 20px;
    flex: none;
    display: flex;
    align-items: center;
    background: #262626;
}

.name-box {
    width: 51px;
    padding: 0 0 0 7px;
    font-size: 8px;
}

.fx-tools {
    width: 67px;
    height: 15px;
    display: flex;
    align-items: center;
    justify-content: space-between;
    margin-left: 4px;
    padding: 0 5px 0 10px;
    border-left: 1px solid #111;
}

.fx {
    color: #bbb;
    font-family: "Liberation Serif", serif;
    font-size: 13px;
    font-style: italic;
}

.formula {
    flex: 1;
    height: 15px;
    background: #383838;
}

.open {
    margin: 0 3px;
}

/* cells */
.sheet {
    position: relative;
    flex: 1;
    min-height: 0;
    overflow: hidden;
    border-top: 1px solid #b8bcbc;
    background: #fff;
}

#cells {
    width: 100%;
    table-layout: fixed;
    border-collapse: separate;
    border-spacing: 0;
    color: #000;
    font-family: Lato, "Liberation Sans", sans-serif;
    font-size: 7px;
    line-height: 9px;
}

#cells tr {
    height: 11px;
}

#cells tbody tr:nth-child(3n+2) {
    height: 10px;
}

#cells thead tr {
    height: 15px;
}

#cells th {
    padding: 0;
    overflow: hidden;
    background: #161616;
    border-right: 1px solid #484848;
    color: #eee;
    font-size: 7px;
}

#cells tbody th {
    border-right: 0;
    border-bottom: 1px solid #484848;
    font-size: 8px;
    vertical-align: bottom;
}

#cells th.sel {
    background: #5a5a5a;
}

#cells .corner {
    background: linear-gradient(135deg, #161616 60%, #6a6a6a 60%);
}

#cells td {
    padding: 0 2px;
    border-right: 1px solid #d9d9d9;
    border-bottom: 1px solid #d9d9d9;
    vertical-align: bottom;
    white-space: nowrap;
}

#cells .b { font-weight: 700; }
#cells .c { text-align: center; }
#cells .blue { color: #2a6fba; }

#cells .y, #cells .g, #cells .t, #cells .d, #cells .m {
    border-color: #222;
    box-shadow: -1px 0 0 #222, 0 -1px 0 #222;
}

#cells .y { background: #ffffa5; }
#cells .g { background: #cbdfb9; }
#cells .t { background: #e6e3b3; }
#cells .d { background: #b0cf94; }
#cells .m { background: #d6ffd2; }
#cells .red { color: #e8392b; }

#cells .active {
    position: relative;
    outline: 1px solid #2f6b41;
}

#cells .active::after {
    content: "";
    position: absolute;
    right: -3px;
    bottom: -3px;
    width: 4px;
    height: 4px;
    background: #2f7a48;
}

.scroll-thumb {
    position: absolute;
    left: 18px;
    right: 270px;
    bottom: 2px;
    height: 8px;
    border-radius: 4px;
    background: #cbcbcb;
}

/* sheet tabs */
.sheet-tabs {
    height: 18px;
    flex: none;
    display: flex;
    background: #333;
    border-bottom: 2px solid #1a1a1a;
    color: #999;
    font-family: "Liberation Sans", Arial, sans-serif;
}

.arrows {
    width: 43px;
    display: flex;
    align-items: center;
    gap: 10px;
    padding-left: 10px;
}

.sheet-tabs button {
    min-width: 56px;
    justify-content: center;
    padding: 0 10px;
    background: #222;
    border-right: 1px solid #4a4a4a;
}

.sheet-tabs .on {
    background: #fff;
    color: #3c8157;
    font-weight: 700;
}

.sheet-tabs .add {
    min-width: 27px;
    padding: 0;
    background: #333;
}

/* status bar */
.status {
    height: 17px;
    flex: none;
    display: flex;
    align-items: center;
    padding: 0 17px;
    background: linear-gradient(#484848, #373737);
}

.views {
    height: 17px;
    display: flex;
    margin-left: auto;
}

.views button {
    width: 26px;
    justify-content: center;
}

.views .on {
    background: #5c5c5c;
}

.zoom {
    display: flex;
    align-items: center;
    gap: 5px;
    margin-left: 4px;
}

.zoom input {
    width: 70px;
    height: 11px;
    appearance: none;
}

.zoom input::-webkit-slider-runnable-track {
    height: 3px;
    border-radius: 2px;
    background: #6e6e6e;
}

.zoom input::-webkit-slider-thumb {
    appearance: none;
    width: 11px;
    height: 11px;
    margin-top: -4px;
    border-radius: 50%;
    background: #a2a2a2;
}

.zoom span {
    margin-left: 7px;
}

/* dock */
.dock {
    height: 54px;
    flex: none;
    display: flex;
    justify-content: space-between;
    margin: 2px 41px 4px;
    padding: 6px 8px 0 6px;
    border: 1px solid #263340;
    border-radius: 13px;
    background: #131d29;
}

.app {
    position: relative;
    width: 36px;
    height: 36px;
    border-radius: 8px;
}

.app > svg {
    width: 100%;
    height: 100%;
    border-radius: 8px;
}

.file > svg {
    height: 40px;
    margin-top: -3px;
    border-radius: 0;
}

.run::after {
    content: "";
    position: absolute;
    left: 17px;
    bottom: -10px;
    width: 3px;
    height: 3px;
    border-radius: 50%;
    background: #9aa2ab;
}

.rule {
    width: 10px;
    height: 40px;
    background: linear-gradient(#46505b, #46505b) center / 1px 100% no-repeat;
}

.white { background: #f8f8f8; }
.finder { background: linear-gradient(#5bc0f8, #2f69ee); }
.launchpad { background: #aeb1b6; }
.messages { background: linear-gradient(#82e77b, #4fbb43); }
.mail { background: linear-gradient(#3f7cf0, #58b5f3); }
.contacts { background: linear-gradient(#b3915a, #9b7743); }
.notes { background: linear-gradient(#f8cf4e 9px, #f4f3f0 9px); }
.music { background: linear-gradient(#ee5f72, #e43a49); }
.store { background: linear-gradient(#4fb3f2, #2861dc); }
.settings { background: linear-gradient(#cfd8dc, #8f8b86); }

.tv {
    display: flex;
    align-items: center;
    justify-content: center;
    background: linear-gradient(#2a3431, #0c0f0f);
    color: #fff;
    font-size: 14px;
    font-weight: 600;
}

.tv > svg {
    width: 11px;
    height: 13px;
    border-radius: 0;
}

.calendar {
    overflow: hidden;
    display: flex;
    flex-direction: column;
    align-items: center;
    background: linear-gradient(#e75c52 11px, #f8f8f8 11px);
}

.month {
    font-size: 7px;
    font-weight: 700;
    line-height: 12px;
}

.day {
    color: #222;
    font-size: 21px;
    font-weight: 300;
    line-height: 23px;
}

.badge {
    position: absolute;
    top: -4px;
    right: -4px;
    width: 16px;
    height: 16px;
    border-radius: 50%;
    background: #e04a3d;
    font-size: 9px;
    line-height: 16px;
    text-align: center;
}

.ext {
    font-size: 6px;
    fill: #444;
}
```
